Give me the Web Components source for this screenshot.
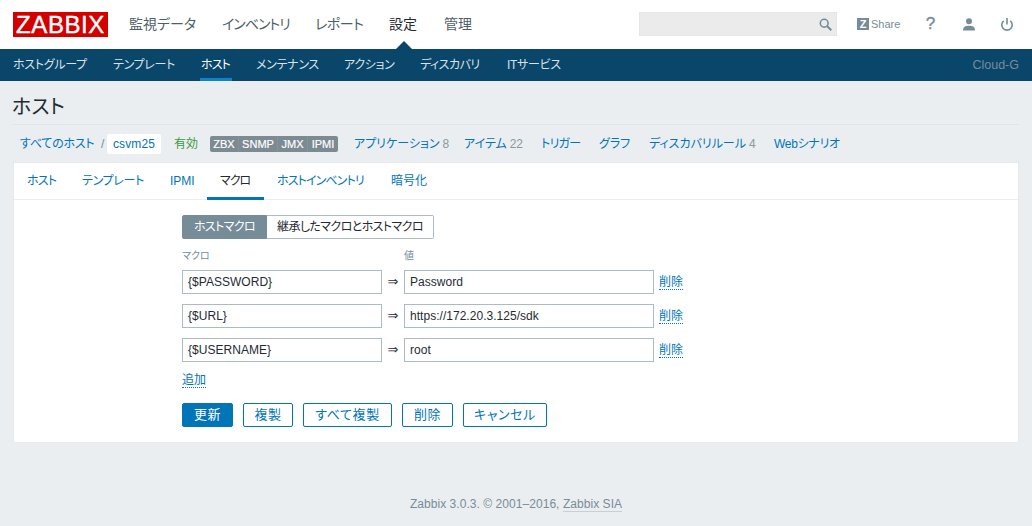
<!DOCTYPE html>
<html lang="ja"><head><meta charset="utf-8"><title>ホスト</title>
<style>
html,body{margin:0;padding:0;background:#ebeef0;}
body{font:12px/14px "Liberation Sans","Noto Sans CJK JP",sans-serif;color:#1f2c33;width:1032px;height:526px;overflow:hidden;font-feature-settings:"palt";}
</style></head><body>
<z-app></z-app>
<script>
const def=(name,css,html)=>{customElements.define(name,class extends HTMLElement{
  constructor(){super();const r=this.attachShadow({mode:'open'});r.innerHTML=`<style>${css}</style>${typeof html==='function'?html(this):html}`;}
});};
const it=(list)=>list.map(([t,w,ls,c])=>`<a class="${c||''}" style="width:${w}px${ls?`;letter-spacing:${ls}px`:''}">${t}</a>`).join('');

def('z-main-nav',`
:host{display:flex;height:49px;background:#fff;position:relative;align-items:flex-start;font-feature-settings:"palt"}
.logo{margin:12px 21px 0 13px;width:95px;height:25px;background:#d40000;color:#fff;font:400 24px/25px "Liberation Sans",sans-serif;letter-spacing:.6px;text-align:center;-webkit-text-stroke:.4px #fff}
nav{display:flex;margin-top:16px;font-size:14px;line-height:16px;color:#4f5f69}
nav a{white-space:nowrap;display:block;flex:none}
nav a.on{color:#1f2c33}
.arrow{position:absolute;left:396px;top:41px;width:0;height:0;border:8px solid transparent;border-top:0;border-bottom-color:#0a466a}
.right{margin-left:auto;display:flex;align-items:center;height:24px;margin-top:12px;color:#768d99}
.search{width:198px;height:24px;box-sizing:border-box;border:1px solid #e5e5e5;background:#ebebeb;position:relative;margin-right:20px}
.search svg{position:absolute;right:4px;top:5px}
.share{display:flex;align-items:center;font-size:11px;margin-right:24px;width:43px}
.z{display:block;width:12px;height:12px;background:#768d99;color:#fff;font:700 11px/12px "Liberation Sans";text-align:center;margin-right:2px;flex:none}
.q{font-size:17px;line-height:18px;font-weight:400;-webkit-text-stroke:.4px #768d99;width:13px;text-align:center;margin-right:26px}
.u{margin-right:26px;display:block}.p{margin-right:19px;display:block}
`,`<div class="logo">ZABBIX</div><nav>${it([['監視データ',93],['インベントリ',93,-1],['レポート',74,-.5],['設定',55,0,'on'],['管理',60]])}</nav><div class="arrow"></div>
<div class="right"><div class="search"><svg width="13" height="13" viewBox="0 0 13 13" fill="none" stroke="#768d99"><circle cx="5.2" cy="5.2" r="3.9" stroke-width="1.6"/><path d="M8 8l4.3 4.3" stroke-width="2"/></svg></div>
<div class="share"><span class="z">Z</span>Share</div><div class="q">?</div>
<svg class="u" width="12" height="13" viewBox="0 0 12 13" fill="#768d99"><circle cx="6" cy="3.3" r="3"/><path d="M0 12.5c0-3.4 2.2-4.8 6-4.8s6 1.4 6 4.8z"/></svg>
<svg class="p" width="12" height="13" viewBox="0 0 12 13" fill="none" stroke="#768d99" stroke-width="1.6"><path d="M6 0v6.5"/><path d="M2.8 2.8A5.2 5.2 0 1 0 9.2 2.8"/></svg></div>`);

def('z-sub-nav',`
:host{display:flex;height:32px;background:#0a466a;color:#d9e2e7;font-size:12px;line-height:32px;padding:0 13px;font-feature-settings:"palt";letter-spacing:-.3px}
a{display:block;position:relative;white-space:nowrap;flex:none}
a.on{color:#fff}
a.on::after{content:"";position:absolute;left:-1px;width:32px;bottom:0;height:3px;background:#0f83c9}
b{font-weight:400;margin-left:auto;color:#768d99;letter-spacing:0;font-size:12.5px}
`,it([['ホストグループ',100],['テンプレート',88],['ホスト',55,-.9,'on'],['メンテナンス',88],['アクション',76],['ディスカバリ',87,-.5],['ITサービス',60]])+`<b>Cloud-G</b>`);

def('z-title',`
:host{display:block;margin:0 13px 0 12px;height:44px;border-bottom:1px solid #e1e5e8;box-sizing:border-box;font-size:20px;line-height:53px;color:#1f2c33;font-weight:400}
`,`<slot></slot>`);

def('z-host-bar',`
:host{display:flex;height:37px;padding:9px 0 0 20px;box-sizing:border-box;font-size:12px;line-height:20px;color:#0275b8;white-space:nowrap;font-feature-settings:"palt"}
.all{width:81px;flex:none;letter-spacing:-.25px}
.sep{color:#768d99;width:6px;flex:none}
.cur{background:#fff;color:#0275b8;width:54px;flex:none;text-align:center;height:20px;margin-right:13px;border-radius:2px;letter-spacing:.15px}
.ok{color:#3c9a41;width:36px;flex:none}
.pill{display:flex;height:16px;margin:2px 16px 0 0;border-radius:2px;overflow:hidden;background:#7c8a92;color:#fff;font-size:11px;line-height:16px;width:128px;flex:none;-webkit-text-stroke:.2px #fff}
.pill span{display:block;flex:none;text-align:center;box-sizing:border-box;border-right:1px solid #84929a}
.pill span:last-child{border:0}
a{display:block;flex:none}
i{font-style:normal;color:#8d989e;margin-left:3px;font-size:12px}
`,`<span class="all">すべてのホスト</span><span class="sep">/</span><span class="cur">csvm25</span><span class="ok">有効</span>
<div class="pill"><span style="width:29px">ZBX</span><span style="width:39px">SNMP</span><span style="width:30px">JMX</span><span style="width:30px">IPMI</span></div>
${it([['アプリケーション<i>8</i>',110],['アイテム<i>22</i>',77],['トリガー',58,-.7],['グラフ',50],['ディスカバリルール<i>4</i>',125],['Webシナリオ',70,-.3]])}`);

def('z-tabs',`
:host{display:flex;height:37px;border-bottom:1px solid #ebeef0;box-sizing:border-box;font-size:12px;line-height:37px;color:#0275b8;white-space:nowrap;font-feature-settings:"palt"}
a{padding-left:13px;box-sizing:border-box;display:block;position:relative;height:37px;flex:none}
a.on{color:#1f2c33}
a.on::after{content:"";position:absolute;left:0;right:0;bottom:0;height:3px;background:#0275b8}
`,it([['ホスト',55,-.8],['テンプレート',88,-.3],['IPMI',50],['マクロ',57,-1,'on'],['ホストインベントリ',114,-.9],['暗号化',61]]));

def('z-toggle',`
:host{display:flex;height:24px;width:252px;box-sizing:border-box;font-size:12px;line-height:22px;border-radius:2px;white-space:nowrap;font-feature-settings:"palt"}
span{display:block;text-align:center;box-sizing:border-box;border:1px solid #acbbc2}
.a{width:85px;background:#768d99;border-color:#768d99;color:#fff;border-radius:2px 0 0 2px;letter-spacing:-.6px}
.b{flex:1;border-left:0;background:#fff;color:#1f2c33;border-radius:0 2px 2px 0;letter-spacing:-.6px}
`,`<span class="a">ホストマクロ</span><span class="b">継承したマクロとホストマクロ</span>`);

def('z-macro-row',`
:host{display:flex;height:24px;margin-bottom:10px;align-items:center;font-size:12px;font-feature-settings:"palt"}
.f{box-sizing:border-box;height:24px;border:1px solid #acbbc2;background:#fff;padding:0 5px;line-height:22px;color:#1f2c33;white-space:nowrap;letter-spacing:.03px}
.m{width:200px}.v{width:250px}
.ar{width:22px;text-align:center;font-family:"DejaVu Sans";font-size:13px;color:#1f2c33}
a{margin-left:5px;color:#0275b8;border-bottom:1px dotted #0275b8;line-height:14px;font-size:12px}
`,t=>`<div class="f m">${t.getAttribute('name')}</div><div class="ar">⇒</div><div class="f v">${t.getAttribute('value')}</div><a>削除</a>`);

def('z-btn',`
:host{display:block;box-sizing:border-box;height:24px;border:1px solid #0275b8;border-radius:2px;color:#0275b8;background:#fff;font-size:13px;line-height:22px;text-align:center;white-space:nowrap;letter-spacing:.6px}
:host([primary]){background:#0275b8;color:#fff}
`,`<slot></slot>`);

def('z-macro-form',`
:host{display:block;padding:15px 0 15px 168px;}
.hd{display:flex;height:12px;margin:11px 0 8px;font-size:10px;line-height:12px;color:#768d99}
.hd span:first-child{width:222px}
.add{display:inline-block;color:#0275b8;border-bottom:1px dotted #0275b8;font-size:12px;line-height:14px;margin:1px 0 15px;vertical-align:top}
.btns{display:flex;gap:10px}
`,`<z-toggle></z-toggle><div class="hd"><span>マクロ</span><span>値</span></div>
<z-macro-row name="{$PASSWORD}" value="Password"></z-macro-row>
<z-macro-row name="{$URL}" value="https://172.20.3.125/sdk"></z-macro-row>
<z-macro-row name="{$USERNAME}" value="root"></z-macro-row>
<a class="add">追加</a>
<div class="btns"><z-btn primary style="width:51px">更新</z-btn><z-btn style="width:50px">複製</z-btn><z-btn style="width:89px">すべて複製</z-btn><z-btn style="width:51px">削除</z-btn><z-btn style="width:84px">キャンセル</z-btn></div>`);

def('z-card',`
:host{display:block;margin:0 13px;background:#fff;border:1px solid #e6eaec;height:281px;box-sizing:border-box}
`,`<slot></slot>`);

def('z-footer',`
:host{display:block;text-align:center;font-size:12px;line-height:16px;color:#768d99;margin-top:53px;letter-spacing:.05px}
a{border-bottom:1px solid #c6d0d5}
`,`Zabbix 3.0.3. © 2001–2016, <a>Zabbix SIA</a>`);

def('z-app',`:host{display:block}`,`<z-main-nav></z-main-nav><z-sub-nav></z-sub-nav><z-title>ホスト</z-title><z-host-bar></z-host-bar><z-card><z-tabs></z-tabs><z-macro-form></z-macro-form></z-card><z-footer></z-footer>`);
</script></body></html>
